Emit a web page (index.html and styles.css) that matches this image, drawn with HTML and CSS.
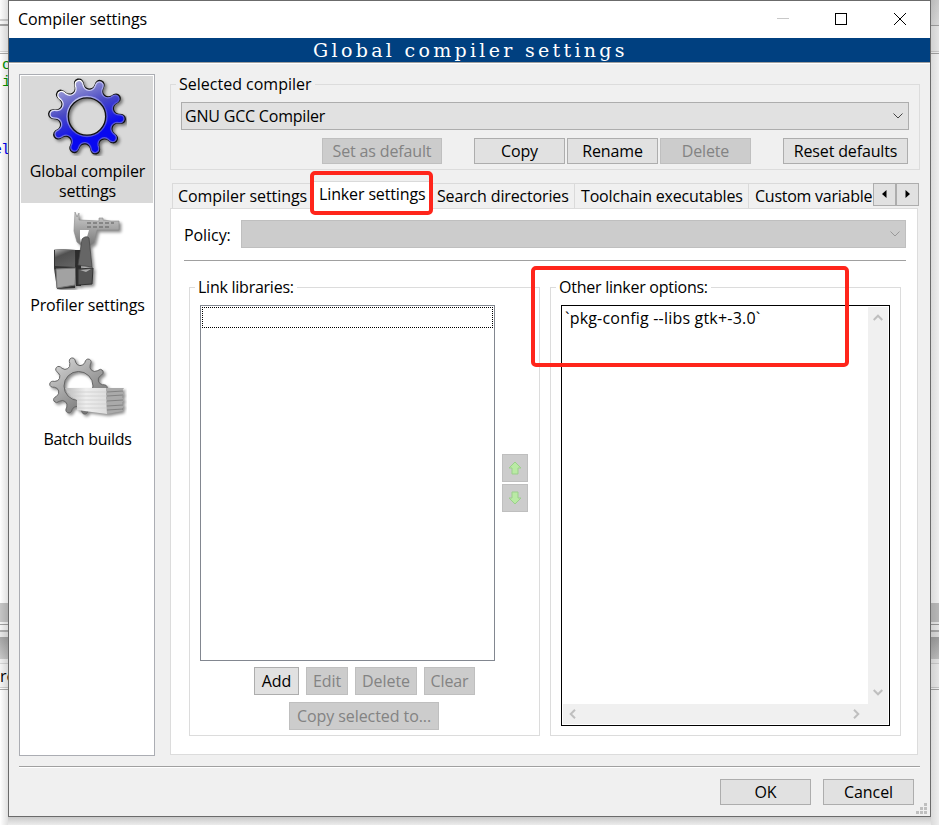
FILE: index.html
```
<!DOCTYPE html>
<html lang="en">
<head>
    <meta charset="utf-8">
    <title>Compiler settings</title>
    <link rel="stylesheet" href="styles.css">
</head>
<body>
    <div class="behind left">
        <span class="code comment">c</span>
        <span class="code comment second">i</span>
        <span class="code keyword">el</span>
        <span class="tab-text">re</span>
    </div>
    <div class="window">
        <div class="titlebar">
            <span class="title">Compiler settings</span>
            <svg class="controls" width="130" height="14" viewBox="0 0 130 14">
                <path d="M0 5.500h12" stroke="#c8c8c8" fill="none"/>
                <rect x="58.500" y="0.500" width="11" height="11" stroke="#000" fill="none"/>
                <path d="M117 0l12 12M129 0l-12 12" stroke="#000" fill="none"/>
            </svg>
        </div>
        <div class="banner">Global compiler settings</div>
        <div class="main">
            <div class="sidebar">
                <div class="item selected">
                    <svg width="80" height="80" viewBox="0 0 80 80">
                        <defs>
                            <linearGradient id="blue" x1="0.2" y1="0" x2="0.6" y2="1">
                                <stop offset="0" stop-color="#b4b4dc"/>
                                <stop offset="0.4" stop-color="#4a4ac4"/>
                                <stop offset="0.75" stop-color="#0808f0"/>
                            </linearGradient>
                            <linearGradient id="rim" x1="0" y1="0" x2="0.8" y2="1">
                                <stop offset="0.2" stop-color="#ffffff"/>
                                <stop offset="0.6" stop-color="#5555d8"/>
                            </linearGradient>
                        </defs>
                        <g class="shadow">
                            <path class="gear" data-cx="40" data-cy="40.500" data-r="37" data-hole="19" fill="#111" stroke="#111" stroke-width="2"/>
                        </g>
                        <path class="gear" data-cx="40" data-cy="40.500" data-r="36" data-hole="20" fill="url(#blue)" stroke="url(#rim)" stroke-width="1.300"/>
                    </svg>
                    <span>Global compiler settings</span>
                </div>
                <div class="item">
                    <svg width="80" height="80" viewBox="0 0 80 80">
                        <defs>
                            <linearGradient id="metal" x1="0" y1="0" x2="0" y2="1">
                                <stop offset="0" stop-color="#cfcfcf"/>
                                <stop offset="1" stop-color="#777"/>
                            </linearGradient>
                            <linearGradient id="cube" x1="0" y1="0" x2="0.5" y2="1">
                                <stop offset="0" stop-color="#b8b8b8"/>
                                <stop offset="0.4" stop-color="#505050"/>
                                <stop offset="1" stop-color="#606060"/>
                            </linearGradient>
                        </defs>
                        <g class="shadow">
                            <path d="M28 2l2 5 2-4v7l20 1V8h4v2l8 1h8v9H50l-3 13-4 3h-8l-5-4-3-11z" fill="url(#metal)" stroke="#888" stroke-width="0.600"/>
                            <path d="M33 20h9l-2 7-3 1-3 5-1-5z" fill="#fff"/>
                            <path d="M40 13h27M40 17h22" stroke="#777" stroke-width="1.500" stroke-dasharray="4 2"/>
                            <path d="M7 40l2-1 20 1v17l-1 21-18 1L7 58z" fill="#333"/>
                            <path d="M8 39l21 1-1 17-20-1z" fill="url(#cube)"/>
                            <path d="M9 59l20-1-1 17-18 3z" fill="#a2a2a2" stroke="#777"/>
                            <path d="M28 40h6v36h-5z" fill="#2c2c2c"/>
                            <path d="M35 29q4-4 7-1l3 29-14-2z" fill="#666" stroke="#444" stroke-width="0.700"/>
                            <path d="M31 59l15-1-1 16-14 1z" fill="#555" stroke="#333"/>
                            <path d="M33 60l11-1-5 3z" fill="#aaa"/>
                        </g>
                    </svg>
                    <span>Profiler settings</span>
                </div>
                <div class="item">
                    <svg width="80" height="80" viewBox="0 0 80 80">
                        <defs>
                            <linearGradient id="grey" x1="0" y1="0" x2="0.7" y2="1">
                                <stop offset="0" stop-color="#ddd"/>
                                <stop offset="1" stop-color="#707070"/>
                            </linearGradient>
                            <linearGradient id="paper">
                                <stop offset="0" stop-color="#bbb"/>
                                <stop offset="0.5" stop-color="#eee"/>
                                <stop offset="1" stop-color="#ddd"/>
                            </linearGradient>
                        </defs>
                        <g class="shadow">
                            <path class="gear" data-cx="31.500" data-cy="42" data-r="28" data-hole="14.500" fill="url(#grey)" stroke="#666"/>
                            <path d="M18 44h41l1 26-30-4V56q-7-3-12-12z" fill="url(#paper)"/>
                            <path d="M59 44h18l-2 3 2 3-2 3 2 3-2 3 2 3-2 3 1 2-16 3z" fill="#aaa"/>
                            <path d="M20 48h40M24 52h36M30 56h30M30 60h30M30 64h30" stroke="#ccc" stroke-width="0.700"/>
                            <path d="M60 48l16-1M60 52l16-1M60 57l16-1M60 62l16-1M60 66l16-1" stroke="#777" stroke-width="0.800"/>
                        </g>
                    </svg>
                    <span class="batch">Batch builds</span>
                </div>
            </div>
            <div class="content">
                <div class="group compiler">
                    <div class="legend">Selected compiler</div>
                    <div class="select">GNU GCC Compiler
                        <svg width="10" height="6" viewBox="0 0 10 6"><path d="M0.500 0.500L5 5l4.500-4.500" fill="none" stroke="#444"/></svg>
                    </div>
                    <div class="buttons">
                        <button class="set-default" disabled>Set as default</button>
                        <button>Copy</button>
                        <button>Rename</button>
                        <button disabled>Delete</button>
                        <button class="reset">Reset defaults</button>
                    </div>
                </div>
                <div class="tabs">
                    <div class="tab first">Compiler settings</div>
                    <div class="tab active">Linker settings<div class="mark"></div></div>
                    <div class="tab search">Search directories</div>
                    <div class="tab toolchain">Toolchain executables</div>
                    <div class="tab custom">Custom variable</div>
                    <button class="scroll"><svg width="5" height="8" viewBox="0 0 5 8"><path d="M4.500 0v8L0 4z"/></svg></button>
                    <button class="scroll"><svg width="5" height="8" viewBox="0 0 5 8"><path d="M0.500 0v8L5 4z"/></svg></button>
                </div>
                <div class="panel">
                    <div class="policy">
                        <span>Policy:</span>
                        <div class="select disabled">
                            <svg width="10" height="6" viewBox="0 0 10 6"><path d="M0.500 0.500L5 5l4.500-4.500" fill="none" stroke="#999"/></svg>
                        </div>
                    </div>
                    <div class="columns">
                        <div class="group libraries">
                            <div class="legend">Link libraries:</div>
                            <div class="list-row">
                                <div class="list"><div class="focus"></div></div>
                                <div class="arrows">
                                    <button disabled><svg width="14" height="14" viewBox="0 0 14 14"><path d="M7 1l6 6h-3v6H4V7H1z" fill="#b9eaa4" stroke="#9bcf8b"/></svg></button>
                                    <button disabled><svg width="14" height="14" viewBox="0 0 14 14"><path d="M7 13l6-6h-3V1H4v6H1z" fill="#b9eaa4" stroke="#9bcf8b"/></svg></button>
                                </div>
                            </div>
                            <div class="actions">
                                <button class="add">Add</button>
                                <button class="edit" disabled>Edit</button>
                                <button class="delete" disabled>Delete</button>
                                <button class="clear" disabled>Clear</button>
                            </div>
                            <button class="copy-selected" disabled>Copy selected to...</button>
                        </div>
                        <div class="group options">
                            <div class="legend">Other linker options:</div>
                            <div class="textarea">
                                <div class="text">`pkg-config --libs gtk+-3.0`</div>
                                <div class="vbar">
                                    <svg width="10" height="7" viewBox="0 0 10 7"><path d="M0.700 6L5 1.700 9.300 6" fill="none" stroke="#bfbfbf" stroke-width="2"/></svg>
                                    <svg width="10" height="7" viewBox="0 0 10 7"><path d="M0.700 1L5 5.300 9.300 1" fill="none" stroke="#bfbfbf" stroke-width="2"/></svg>
                                </div>
                                <div class="hbar">
                                    <svg width="7" height="10" viewBox="0 0 7 10"><path d="M6 0.700L1.700 5 6 9.300" fill="none" stroke="#bfbfbf" stroke-width="2"/></svg>
                                    <svg width="7" height="10" viewBox="0 0 7 10"><path d="M1 0.700L5.300 5 1 9.300" fill="none" stroke="#bfbfbf" stroke-width="2"/></svg>
                                </div>
                            </div>
                            <div class="mark"></div>
                        </div>
                    </div>
                </div>
            </div>
        </div>
        <div class="footer">
            <button>OK</button>
            <button>Cancel</button>
            <svg class="grip" width="11" height="11" viewBox="0 0 11 11" fill="#bfbfbf">
                <path d="M8 0h3v3H8zM4 4h3v3H4zM8 4h3v3H8zM0 8h3v3H0zM4 8h3v3H4zM8 8h3v3H8z"/>
            </svg>
        </div>
    </div>
    <div class="behind right"></div>
    <script src="gears.js"></script>
</body>
</html>
```
FILE: styles.css
```
* {
    box-sizing: border-box;
}

body {
    margin: 0;
    width: 939px;
    height: 825px;
    overflow: hidden;
    display: grid;
    grid-template-columns: 8px 923px 8px;
    background: linear-gradient(#f0f0f0 817px, #c9c9c9 817px, #ececec 825px);
    font-family: "Open Sans", "Noto Sans", sans-serif;
    font-size: 16px;
    line-height: 20px;
    letter-spacing: -0.07px;
    color: #000;
}

button {
    display: flex;
    align-items: center;
    justify-content: center;
    width: 91px;
    height: 26px;
    padding: 0;
    border: 1px solid #adadad;
    background: #e1e1e1;
    font: inherit;
    letter-spacing: inherit;
    color: #000;
    white-space: nowrap;
}

button:disabled {
    border-color: #bfbfbf;
    background: #cccccc;
    color: #838383;
}

/* parts of the editor that show beside the dialog */
.behind {
    position: relative;
    height: 825px;
    overflow: hidden;
}

.left {
    background:
        linear-gradient(90deg, rgba(0, 0, 0, 0), rgba(0, 0, 0, 0.12)),
        linear-gradient(#fcfcfc 19px, #d0d0d0 19px, #d0d0d0 21px, #fafafa 21px, #fafafa 24px, #a5a5a5 24px, #a5a5a5 26px, #f4f4f4 26px, #f4f4f4 51px, #d5d5d5 51px, #d5d5d5 52px, #fff 52px, #fff 53px, #ababab 53px, #ababab 54px, #fff 54px, #fff 603px, #c5c5c5 603px, #c5c5c5 622px, #f5f5f5 622px, #f5f5f5 624px, #a0a0a0 624px, #a0a0a0 625px, #f5f5f5 625px, #f5f5f5 630px, #b0b0b0 630px, #b0b0b0 632px, #e8e8e8 632px, #e8e8e8 637px, #a5a5a5 637px, #c8c8c8 659px, #f0f0f0 659px, #f0f0f0 663px, #d5d5d5 663px, #d5d5d5 664px, #f5f5f5 664px, #f5f5f5 687px, #d0d0d0 687px, #d0d0d0 688px, #fff 688px, #fff 689px, #aaa 689px, #aaa 690px, #fff 690px);
}

.right {
    background:
        linear-gradient(90deg, rgba(0, 0, 0, 0.14), rgba(0, 0, 0, 0.07)),
        linear-gradient(#d8d8d8, #e8e8e8 25px, #a8a8a8 25px, #a8a8a8 26px, #f4f4f4 26px, #f4f4f4 51px, #d5d5d5 51px, #d5d5d5 52px, #fff 52px, #fff 53px, #ababab 53px, #ababab 54px, #fff 54px, #fff 603px, #c5c5c5 603px, #c5c5c5 622px, #f5f5f5 622px, #f5f5f5 624px, #a0a0a0 624px, #a0a0a0 625px, #f5f5f5 625px, #f5f5f5 630px, #b0b0b0 630px, #b0b0b0 632px, #e8e8e8 632px, #e8e8e8 637px, #a5a5a5 637px, #c8c8c8 659px, #f0f0f0 659px, #f0f0f0 663px, #d5d5d5 663px, #d5d5d5 664px, #f5f5f5 664px, #f5f5f5 687px, #d0d0d0 687px, #d0d0d0 688px, #fff 688px, #fff 689px, #aaa 689px, #aaa 690px, #fff 690px);
}

.code {
    position: absolute;
    top: 57px;
    left: 2px;
    font: 15px/18px "Liberation Mono", monospace;
}

.comment {
    color: #008800;
}

.second {
    top: 74px;
}

.keyword {
    top: 142px;
    left: -7px;
    letter-spacing: -1px;
    color: #0000e0;
}

.tab-text {
    position: absolute;
    top: 666px;
    left: 0;
}

.window {
    width: 923px;
    height: 817px;
    border: 1px solid #6b6b6b;
    background: #f0f0f0;
}

.titlebar {
    display: flex;
    align-items: center;
    justify-content: space-between;
    height: 37px;
    padding: 0 23px 0 9px;
    background: #fff;
}

.title {
    padding-bottom: 2px;
}

.banner {
    height: 25px;
    border-bottom: 1px solid #a0a0a0;
    background: #004080;
    box-shadow: 0 1px #fff;
    font: 19px/25px "DejaVu Serif", serif;
    letter-spacing: 3.3px;
    text-align: center;
    text-indent: 2px;
    color: #fff;
}

.main {
    display: flex;
    gap: 15px;
    height: 704px;
    margin: 0 10px;
    padding-top: 11px;
    border-bottom: 1px solid #a0a0a0;
    box-shadow: 0 1px #fff;
}

/* category list */
.sidebar {
    width: 136px;
    height: 682px;
    padding: 1px;
    border: 1px solid #abadb3;
    background: #fff;
}

.item {
    display: flex;
    flex-direction: column;
    align-items: center;
    height: 127px;
    margin-bottom: 7px;
    padding-left: 1px;
    letter-spacing: -0.15px;
    text-align: center;
}

.item svg {
    flex: none;
    margin: 0 2px 5px 0;
}

.item .batch {
    letter-spacing: -0.3px;
}

.item.selected {
    background: #d9d9d9;
}

.shadow {
    filter: drop-shadow(2px 2px 1.500px rgba(0, 0, 0, 0.45));
}

.content {
    width: 750px;
}

.group {
    position: relative;
    border: 1px solid #dcdcdc;
}

.legend {
    width: max-content;
    height: 20px;
    margin: -11px 0 0 5px;
    padding: 0 3px;
    background: #f0f0f0;
}

.compiler {
    height: 86px;
    margin-top: 10px;
}

.compiler .legend {
    letter-spacing: 0;
}

.select {
    display: flex;
    align-items: center;
    justify-content: space-between;
    height: 28px;
    padding: 0 5px 0 3px;
    border: 1px solid #adadad;
    background: #e1e1e1;
    letter-spacing: -0.2px;
}

.compiler .select {
    margin: 8px 10px 8px;
}

.select.disabled {
    flex: 1;
    justify-content: flex-end;
    border-color: #bfbfbf;
    background: #cccccc;
}

.buttons {
    display: flex;
    justify-content: flex-end;
    gap: 2px;
    padding-right: 11px;
    letter-spacing: -0.15px;
}

.buttons .set-default {
    width: 120px;
    margin-right: 30px;
}

.buttons .reset {
    width: 125px;
    margin-left: 30px;
}

.tabs {
    display: flex;
    height: 25px;
    margin: 13px 0 0 2px;
}

.tab {
    height: 25px;
    padding: 2px 0 0 6px;
    border: 1px solid #dadada;
    border-width: 1px 0 0 1px;
    white-space: nowrap;
    overflow: hidden;
}

.tab.first {
    width: 140px;
    padding-left: 5px;
}

.tab.active {
    position: relative;
    width: 119px;
    height: 28px;
    margin-top: -2px;
    background: #fff;
    letter-spacing: -0.13px;
    overflow: visible;
    z-index: 1;
}

.tab.search {
    width: 143px;
    padding-left: 6px;
    border-left: 0;
    letter-spacing: -0.15px;
}

.tab.toolchain {
    width: 174px;
    letter-spacing: -0.17px;
}

.tab.custom {
    width: 125px;
    letter-spacing: -0.25px;
}

.scroll {
    width: 23px;
    height: 23px;
}

.scroll svg {
    margin-top: -2px;
}

/* red outline drawn over the highlighted parts */
.mark {
    position: absolute;
    border: 4px solid #ff2116;
    border-radius: 5px;
    opacity: 0.98;
}

.tab .mark {
    top: -11px;
    left: -3px;
    width: 123px;
    height: 44px;
}

.options .mark {
    top: -22px;
    left: -20px;
    width: 318px;
    height: 101px;
}

.panel {
    width: 748px;
    height: 547px;
    padding: 11px 12px 0 13px;
    border: 1px solid #dcdcdc;
    background: #fff;
}

.panel .legend {
    background: #fff;
    letter-spacing: -0.25px;
}

.policy {
    display: flex;
    height: 41px;
    margin-right: -1px;
    border-bottom: 1px solid #a0a0a0;
}

.policy span {
    width: 57px;
    padding-top: 5px;
}

.columns {
    display: flex;
    gap: 10px;
    margin: 26px 0 0 5px;
}

.columns .group {
    flex: none;
    width: 351px;
    height: 449px;
}

.list-row {
    display: flex;
    align-items: center;
    gap: 7px;
    margin: 8px 0 6px 10px;
}

.list {
    width: 295px;
    height: 356px;
    padding: 1px;
    border: 1px solid #828790;
}

.focus {
    height: 21px;
    border: 1px dotted #000;
}

.arrows {
    display: flex;
    flex-direction: column;
    gap: 2px;
}

.arrows button {
    width: 26px;
    height: 28px;
}

.actions {
    display: flex;
    gap: 7px;
    margin: 0 0 7px 64px;
}

.actions button,
.copy-selected {
    height: 28px;
}

.add {
    width: 45px;
}

.edit {
    width: 42px;
}

.delete {
    width: 62px;
}

.clear {
    width: 51px;
}

.copy-selected {
    width: 150px;
    margin-left: 99px;
}

.textarea {
    display: grid;
    grid-template: 397px 20px / 305px 20px;
    width: 329px;
    height: 421px;
    margin: 8px 0 0 10px;
    padding: 1px;
    border: 1px solid #000;
}

.text {
    padding: 1px 2px;
    letter-spacing: 0.2px;
}

.vbar,
.hbar {
    display: flex;
    align-items: center;
    justify-content: space-between;
    background: #f0f0f0;
}

.vbar {
    flex-direction: column;
    padding: 7px 0 8px;
}

.hbar {
    grid-column: 1 / 3;
    padding: 0 28px 0 6px;
}

.footer {
    position: relative;
    display: flex;
    gap: 12px;
    justify-content: flex-end;
    padding: 12px 16px 0 0;
}

.grip {
    position: absolute;
    top: 36px;
    right: 3px;
}
```
FILE: gears.js
```
const TEETH = 10;

const point = (cx, cy, r, deg) => {
    const a = deg * Math.PI / 180;
    return `${(cx + r * Math.cos(a)).toFixed(2)} ${(cy + r * Math.sin(a)).toFixed(2)}`;
};

document.querySelectorAll(".gear").forEach((gear) => {
    const cx = Number(gear.dataset.cx);
    const cy = Number(gear.dataset.cy);
    const r = Number(gear.dataset.r);
    const hole = Number(gear.dataset.hole);
    const p = (scale, deg) => point(cx, cy, r * scale, deg);

    let d = `M${p(0.73, -122)}`;
    for (let i = 0; i < TEETH; i++) {
        const a = -104 + i * 36;
        d += `Q${p(0.74, a - 9)} ${p(0.86, a - 7)}`;
        d += `Q${p(1.03, a - 7)} ${p(1.03, a)}`;
        d += `Q${p(1.03, a + 7)} ${p(0.86, a + 7)}`;
        d += `Q${p(0.74, a + 9)} ${p(0.73, a + 18)}`;
    }
    d += `ZM${cx - hole} ${cy}a${hole} ${hole} 0 1 0 ${hole * 2} 0a${hole} ${hole} 0 1 0 ${-hole * 2} 0Z`;
    gear.setAttribute("d", d);
    gear.setAttribute("fill-rule", "evenodd");
});
```
